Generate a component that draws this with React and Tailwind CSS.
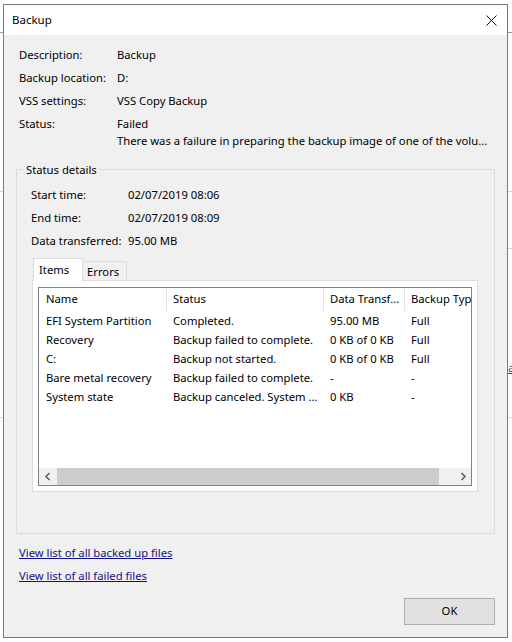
import React from "react";

const ITEMS = [
  { name: "EFI System Partition", status: "Completed.", data: "95.00 MB", type: "Full" },
  { name: "Recovery", status: "Backup failed to complete.", data: "0 KB of 0 KB", type: "Full" },
  { name: "C:", status: "Backup not started.", data: "0 KB of 0 KB", type: "Full" },
  { name: "Bare metal recovery", status: "Backup failed to complete.", data: "-", type: "-" },
  { name: "System state", status: "Backup canceled. System ...", data: "0 KB", type: "-" },
];

function Field({ label, children, wide }) {
  return (
    <div className="flex leading-[17px]">
      <span className={`${wide ? "w-[97px]" : "w-[98px]"} shrink-0 whitespace-nowrap`}>{label}</span>
      <div className="whitespace-nowrap">{children}</div>
    </div>
  );
}

function Chevron({ dir }) {
  return (
    <svg width="8" height="9" viewBox="0 0 8 9" className="text-[#606060]">
      <polyline
        points={dir === "left" ? "5.5,1 2,4.5 5.5,8" : "2.5,1 6,4.5 2.5,8"}
        fill="none"
        stroke="currentColor"
        strokeWidth="1.6"
      />
    </svg>
  );
}

export default function App() {
  return (
    <div className="relative h-[642px] w-[512px] overflow-hidden bg-white font-['Noto_Sans',sans-serif] text-[11.25px] text-black">
      {/* background window peeking out */}
      <div className="absolute left-0 top-[32px] h-px w-full bg-[#9a9a9a]" />
      <div className="absolute left-0 top-[191px] h-px w-full bg-[#d4d4d4]" />
      <div className="absolute right-0 top-[248px] h-px w-[10px] bg-[#d4d4d4]" />
      <div className="absolute left-0 top-[417px] h-px w-full bg-[#dcdcdc]" />
      <span className="absolute left-[508px] top-[360px] text-[#1a3fb0] underline">a</span>

      {/* dialog */}
      <div className="relative z-10 ml-[3px] mt-[4px] flex h-[634px] w-[505px] flex-col border border-[#7a7a7a] bg-[#f0f0f0]">
        {/* title bar */}
        <div className="flex h-[30px] shrink-0 items-center justify-between bg-white pl-[8px] pr-[10px]">
          <span className="text-[11.5px]">Backup</span>
          <svg width="11" height="11" viewBox="0 0 11 11">
            <path d="M0.5 0.5 L10.5 10.5 M10.5 0.5 L0.5 10.5" stroke="#111" strokeWidth="1" />
          </svg>
        </div>

        <div className="flex flex-1 flex-col px-[12px] pt-[11px]">
          {/* summary */}
          <div className="flex flex-col gap-[6px] pl-[3px]">
            <Field label="Description:">Backup</Field>
            <Field label="Backup location:">D:</Field>
            <Field label="VSS settings:">VSS Copy Backup</Field>
            <Field label="Status:">
              <div>Failed</div>
              <div>There was a failure in preparing the backup image of one of the volu...</div>
            </Field>
          </div>

          {/* status details group */}
          <fieldset className="mt-[12px] h-[373px] border border-[#dcdcdc] px-[14px] pb-[40px]">
            <legend className="-ml-[7px] px-[2px] leading-[17px]">Status details</legend>

            <div className="mt-[8px] flex flex-col gap-[6px]">
              <Field label="Start time:" wide>02/07/2019 08:06</Field>
              <Field label="End time:" wide>02/07/2019 08:09</Field>
              <Field label="Data transferred:" wide>95.00 MB</Field>
            </div>

            {/* tabs */}
            <div className="ml-[1px] mt-[9px]">
              <div className="flex items-end pl-[1px]">
                <div className="relative z-10 -mb-px h-[23px] w-[50px] border border-b-0 border-[#dcdcdc] bg-white pl-[5px] pt-[2px] leading-[17px]">
                  Items
                </div>
                <div className="h-[19px] w-[44px] border border-b-0 border-l-0 border-[#dcdcdc] bg-[#f0f0f0] pl-[4px] pt-px leading-[17px]">
                  Errors
                </div>
              </div>

              <div className="h-[212px] w-[446px] border border-[#dcdcdc] bg-white pl-[5px] pt-[6px]">
                {/* list view */}
                <div className="flex h-[199px] w-[434px] flex-col border border-[#828282] bg-white">
                  <div className="flex h-[23px] shrink-0 items-center overflow-hidden whitespace-nowrap">
                    <div className="h-full w-[128px] shrink-0 border-r border-[#e5e5e5] pl-[7px] leading-[21px]">Name</div>
                    <div className="h-full w-[157px] shrink-0 border-r border-[#e5e5e5] pl-[6px] leading-[21px]">Status</div>
                    <div className="h-full w-[81px] shrink-0 border-r border-[#e5e5e5] pl-[6px] leading-[21px]">Data Transf...</div>
                    <div className="h-full shrink-0 pl-[6px] leading-[21px]">Backup Type</div>
                  </div>

                  <div className="flex-1">
                    {ITEMS.map((row) => (
                      <div key={row.name} className="flex h-[19px] items-center whitespace-nowrap leading-[19px]">
                        <div className="w-[128px] shrink-0 overflow-hidden pl-[7px]">{row.name}</div>
                        <div className="w-[157px] shrink-0 overflow-hidden pl-[6px]">{row.status}</div>
                        <div className="w-[81px] shrink-0 overflow-hidden pl-[6px]">{row.data}</div>
                        <div className="flex-1 pl-[6px]">{row.type}</div>
                      </div>
                    ))}
                  </div>

                  {/* horizontal scrollbar */}
                  <div className="flex h-[17px] shrink-0 items-center bg-[#f0f0f0]">
                    <div className="flex h-full w-[18px] items-center justify-center">
                      <Chevron dir="left" />
                    </div>
                    <div className="h-full w-[382px] bg-[#cdcdcd]" />
                    <div className="flex-1" />
                    <div className="flex h-full w-[17px] items-center justify-center">
                      <Chevron dir="right" />
                    </div>
                  </div>
                </div>
              </div>
            </div>
          </fieldset>

          {/* links */}
          <div className="mt-[10px] flex flex-col items-start gap-[6px] pl-[3px] leading-[17px] text-[#10108a]">
            <a className="underline">View list of all backed up files</a>
            <a className="underline">View list of all failed files</a>
          </div>

          <div className="mt-auto flex justify-end pb-[12px]">
            <button
              type="button"
              className="h-[27px] w-[91px] border border-[#adadad] bg-[#e1e1e1] text-[11.25px]"
            >
              OK
            </button>
          </div>
        </div>
      </div>
    </div>
  );
}
